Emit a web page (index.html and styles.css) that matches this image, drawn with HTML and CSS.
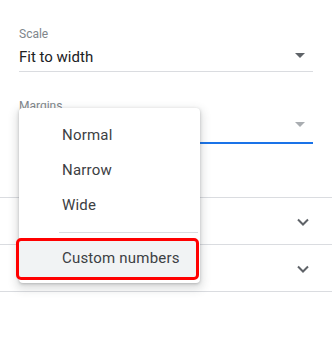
FILE: index.html
```html
<!DOCTYPE html>
<html lang="en">
<head>
  <meta charset="UTF-8">
  <meta name="viewport" content="width=device-width, initial-scale=1.0">
  <title>Print settings</title>
  <link rel="stylesheet" href="styles.css">
</head>
<body>
  <div class="panel">
    <!-- Campos de seleção -->
    <div class="fields">
      <div class="field">
        <div class="field-label">Scale</div>
        <div class="select">
          <span class="select-value">Fit to width</span>
          <span class="arrow"></span>
        </div>
      </div>

      <div class="field field-open">
        <div class="field-label">Margins</div>
        <div class="select select-active">
          <span class="select-value"></span>
          <span class="arrow arrow-muted"></span>
        </div>
      </div>
    </div>

    <!-- Seções recolhidas -->
    <div class="section">
      <svg class="chevron" width="12" height="8" viewBox="0 0 12 8"><path d="M1 1.5 L6 6.5 L11 1.5" fill="none" stroke="#5f6368" stroke-width="2"/></svg>
    </div>
    <div class="section">
      <svg class="chevron" width="12" height="8" viewBox="0 0 12 8"><path d="M1 1.5 L6 6.5 L11 1.5" fill="none" stroke="#5f6368" stroke-width="2"/></svg>
    </div>

    <!-- Menu aberto das margens -->
    <ul class="menu">
      <li class="menu-item">Normal</li>
      <li class="menu-item">Narrow</li>
      <li class="menu-item">Wide</li>
      <li class="menu-separator"></li>
      <li class="menu-item menu-item-selected">Custom numbers</li>
    </ul>
  </div>
</body>
</html>
```

FILE: styles.css
```css
body {
  margin: 0;
  background: #fff;
  font-family: Roboto, "Noto Sans", sans-serif;
}

.panel {
  position: relative;
  width: 332px;
  height: 362px;
}

.fields {
  padding: 26px 19px 0;
  height: 197px;
  box-sizing: border-box;
}
/* Campos com rótulo pequeno e linha inferior */

.field-label {
  font-size: 12px;
  line-height: 16px;
  color: #80868b;
}

.select {
  display: flex;
  justify-content: space-between;
  align-items: center;
  margin-top: 5px;
  padding-bottom: 4px;
  border-bottom: 1px solid #dadce0;
}

.select-value {
  min-height: 20px;
  font-size: 15px;
  line-height: 20px;
  color: #202124;
}

.field-open {
  margin-top: 26px;
}

.select-active {
  padding-bottom: 3px;
  border-bottom: 2px solid #1a73e8;
}

.arrow {
  width: 0;
  height: 0;
  margin: 0 8px 4px 0;
  border-left: 5px solid transparent;
  border-right: 5px solid transparent;
  border-top: 5px solid #5f6368;
}

.arrow-muted {
  margin-bottom: 9px;
  border-top-color: #a9adb1;
}

.section {
  display: flex;
  justify-content: flex-end;
  align-items: center;
  height: 46px;
  padding-right: 23px;
  border-top: 1px solid #dadce0;
}

.section:last-of-type {
  border-bottom: 1px solid #dadce0;
}

.chevron {
  display: block;
  margin-top: 1px;
}

/* Menu suspenso sobre o campo de margens */
.menu {
  position: absolute;
  left: 19px;
  top: 108px;
  width: 181px;
  margin: 0;
  padding: 10px 0 6px;
  list-style: none;
  background: #fff;
  border-radius: 4px;
  box-shadow: 0 1px 3px rgba(60, 64, 67, 0.3), 0 4px 8px 3px rgba(60, 64, 67, 0.15);
}

.menu-item {
  height: 35px;
  padding-left: 43px;
  font-size: 15px;
  line-height: 35px;
  letter-spacing: 0.2px;
  color: #3c4043;
}

.menu-separator {
  height: 1px;
  margin: 9px 2px 8px 40px;
  background: #dadce0;
}

.menu-item-selected {
  height: 36px;
  margin-right: 4px;
  line-height: 34px;
  background: #f1f3f4;
  outline: 3px solid #f00;
  border-radius: 2px;
}
```
